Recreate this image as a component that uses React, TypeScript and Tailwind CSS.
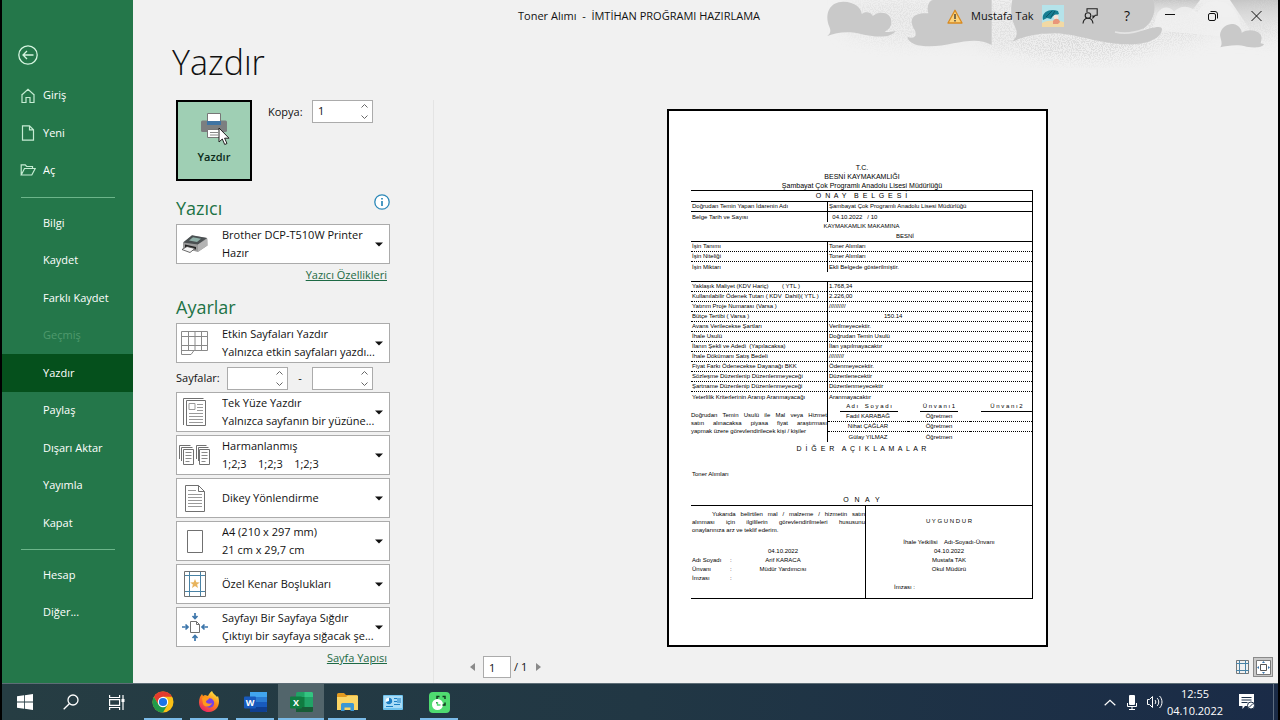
import React, { useState } from 'react';

interface NavItem {
    label: string;
    icon?: React.ReactNode;
    active?: boolean;
    disabled?: boolean;
}

interface Setting {
    id: string;
    title: string;
    detail?: string;
    icon: React.ReactNode;
}

const stroke = { fill: 'none', stroke: 'currentColor' };

const HomeIcon = () => (
    <svg width="16" height="16" viewBox="0 0 16 16" {...stroke}>
        <path d="M1.5 7.2 8 1.2l6.5 6M2 6.8V14.5h4V9.5h4v5h4V6.8" strokeWidth="1.2" />
    </svg>
);

const NewIcon = () => (
    <svg width="16" height="16" viewBox="0 0 16 16" {...stroke}>
        <path d="M2.5.8h7l4 4v10.4h-11zM9.5.8v4h4" strokeWidth="1.2" />
    </svg>
);

const OpenIcon = () => (
    <svg width="16" height="16" viewBox="0 0 16 16" {...stroke}>
        <path d="M1.2 13V2.8h4l1.5 1.7h5.8V6.5M1.2 13 4.5 6.5h10.7L11.8 13z" strokeWidth="1.2" />
    </svg>
);

const primaryNav: NavItem[] = [
    { label: 'Giriş', icon: <HomeIcon /> },
    { label: 'Yeni', icon: <NewIcon /> },
    { label: 'Aç', icon: <OpenIcon /> },
];

const fileNav: NavItem[] = [
    { label: 'Bilgi' },
    { label: 'Kaydet' },
    { label: 'Farklı Kaydet' },
    { label: 'Geçmiş', disabled: true },
    { label: 'Yazdır', active: true },
    { label: 'Paylaş' },
    { label: 'Dışarı Aktar' },
    { label: 'Yayımla' },
    { label: 'Kapat' },
];

const accountNav: NavItem[] = [{ label: 'Hesap' }, { label: 'Diğer...' }];

const PrinterDeviceIcon = () => (
    <svg width="28" height="20" viewBox="0 0 28 20">
        <path d="M2 9 11 1.5 26 4l.5 7.5L17 18 2 14z" fill="#9a9a9a" />
        <path d="M2 8.5 11 1.2 26 4 17 10.5z" fill="#4b5052" />
        <path d="M8 6.5 12 3.3 20 4.8 16 8z" fill="#8fb0a8" />
        <path d="M17 10.5 26.5 4.5v7L17 17.5z" fill="#b4b4b4" />
        <path d="M4 10.5 15 13v2.5L4 13z" fill="#222" />
        <path d="M1 15.5 6 12.5l8 2-5 4z" fill="#f5f5f5" stroke="#444" strokeWidth=".8" />
    </svg>
);

const SheetIcon = () => (
    <svg width="28" height="26" viewBox="0 0 28 26" fill="none" stroke="#8a8a8a">
        <path d="M.5 1.5h26v19H13l-3 4H.5zM.5 6.5h26M.5 15.500h26M.5 20.5H13M7.500 1.500v19M14 1.500v19M20.500 1.500v19" />
    </svg>
);

const OneSidedIcon = () => (
    <svg width="24" height="30" viewBox="0 0 24 30" fill="none" stroke="#707070">
        <path d="M.5 28V1.500h20" />
        <path d="M3.500 3.500h19v25h-19z" fill="#fff" />
        <path d="M6 6.500h6v6H6zM14 7.500h6M14 10.500h6M14 13.500h6M6 16.500h14M6 19.500h14M6 22.500h14M6 25.500h14" stroke="#9a9a9a" />
    </svg>
);

const CollatedIcon = () => (
    <svg width="32" height="22" viewBox="0 0 32 22" fill="none" stroke="#707070">
        <path d="M.5 15V1.500h11M2.500 17V3.500h11M17.500 15V1.500h10M19.500 17V3.500h10" />
        <path d="M4.500 5.500h10v15h-10zM20.500 5.500h10v15h-10z" fill="#fff" />
        <path d="M6.500 8.500h6M6.500 11.500h6M6.500 14.500h6M6.500 17.500h4M22.500 8.500h6M22.500 11.500h6M22.500 14.500h6M22.500 17.500h4" stroke="#8a8a8a" />
    </svg>
);

const PortraitIcon = () => (
    <svg width="20" height="27" viewBox="0 0 20 27" fill="none" stroke="#707070">
        <path d="M.5.5h13l6 6v20H.5zM13.500.500v6h6" />
        <path d="M3 5.500h8M3 9.500h14M3 12.500h14M3 15.500h14M3 18.500h14M3 21.500h14" stroke="#9a9a9a" />
    </svg>
);

const PaperIcon = () => (
    <svg width="16" height="23" viewBox="0 0 16 23" fill="#fff" stroke="#707070">
        <path d="M.5.5h15v22H.5z" />
    </svg>
);

const MarginsIcon = () => (
    <svg width="22" height="26" viewBox="0 0 22 26" fill="none">
        <path d="M.5.5h21v25H.5z" stroke="#707070" />
        <path d="M5.500 1v24M16.500 1v24M1 4.500h20M1 20.500h20" stroke="#4a83a5" />
        <path d="m11 8 1.300 3.200 3.500.200-2.700 2.200.900 3.400-3-1.900L8 17l.9-3.400-2.700-2.200 3.500-.2z" fill="#e8b45e" />
    </svg>
);

const FitPageIcon = () => (
    <svg width="26" height="28" viewBox="0 0 26 28" fill="none">
        <path d="M8.500 8.500h6l3 3v8h-9zM14.500 8.500v3h3" fill="#fff" stroke="#707070" />
        <path
            d="M13 0v5.500M10.500 3 13 5.500 15.500 3M13 28v-5.500M10.500 25l2.500-2.500 2.500 2.500M0 14h6M3.500 11.500 6 14l-2.500 2.500M26 14h-6M22.500 11.500 20 14l2.500 2.500"
            stroke="#3d76ab"
            strokeWidth="1.700"
        />
    </svg>
);

const printer: Setting = {
    id: 'printer',
    title: 'Brother DCP-T510W Printer',
    detail: 'Hazır',
    icon: <PrinterDeviceIcon />,
};

const scope: Setting = {
    id: 'scope',
    title: 'Etkin Sayfaları Yazdır',
    detail: 'Yalnızca etkin sayfaları yazdı...',
    icon: <SheetIcon />,
};

const pageSettings: Setting[] = [
    { id: 'sides', title: 'Tek Yüze Yazdır', detail: 'Yalnızca sayfanın bir yüzüne...', icon: <OneSidedIcon /> },
    { id: 'collate', title: 'Harmanlanmış', detail: '1;2;3    1;2;3    1;2;3', icon: <CollatedIcon /> },
    { id: 'orientation', title: 'Dikey Yönlendirme', icon: <PortraitIcon /> },
    { id: 'paper', title: 'A4 (210 x 297 mm)', detail: '21 cm x 29,7 cm', icon: <PaperIcon /> },
    { id: 'margins', title: 'Özel Kenar Boşlukları', icon: <MarginsIcon /> },
    { id: 'scaling', title: 'Sayfayı Bir Sayfaya Sığdır', detail: 'Çıktıyı bir sayfaya sığacak şe...', icon: <FitPageIcon /> },
];

const NavGroup: React.FC<{ items: NavItem[]; className: string }> = ({ items, className }) => (
    <ul className={`grid auto-rows-fr ${className}`}>
        {items.map((item) => (
            <li key={item.label} className="grid">
                <button
                    type="button"
                    disabled={item.disabled}
                    className={`flex items-center pl-[18px] text-left ${
                        item.active ? 'bg-[#05501c] text-white' : item.disabled ? 'text-[#4f9a6d]' : 'text-white'
                    }`}
                >
                    <span className="w-[23px] text-[#c5ecd3]">{item.icon}</span>
                    {item.label}
                </button>
            </li>
        ))}
    </ul>
);

const SettingSelect: React.FC<{ setting: Setting }> = ({ setting }) => (
    <div className="flex h-10 items-center border border-[#ababab] bg-white">
        <span className="flex w-9 shrink-0 justify-center">{setting.icon}</span>
        <div className="ml-[9px] min-w-0 flex-1 leading-[18px]">
            <select
                id={setting.id}
                aria-label={setting.title}
                className="block h-[18px] w-full appearance-none bg-transparent outline-none"
            >
                <option>{setting.title}</option>
            </select>
            {setting.detail && <p className="whitespace-pre">{setting.detail}</p>}
        </div>
        <svg className="mr-[6px] ml-1 shrink-0" width="8" height="5" viewBox="0 0 8 5">
            <path d="M0 .5h8L4 4.500z" fill="#111" />
        </svg>
    </div>
);

const Spinner: React.FC<{ id: string; label?: string; initial: string }> = ({ id, label, initial }) => {
    const [value, setValue] = useState(initial);
    const step = (by: number) => setValue(String(Math.max(1, (Number(value) || 0) + by)));

    return (
        <div className="flex h-[23px] w-[61px] border border-[#ababab] bg-white">
            <input
                id={id}
                aria-label={label}
                value={value}
                onChange={(e) => setValue(e.target.value)}
                className="w-[48px] bg-transparent pl-[5px] outline-none"
            />
            <div className="flex flex-1 flex-col justify-around">
                <button type="button" aria-label="Artır" onClick={() => step(1)}>
                    <svg width="7" height="4" viewBox="0 0 7 4" fill="none" stroke="#666">
                        <path d="M.5 3.500l3-3 3 3" />
                    </svg>
                </button>
                <button type="button" aria-label="Azalt" onClick={() => step(-1)}>
                    <svg width="7" height="4" viewBox="0 0 7 4" fill="none" stroke="#666">
                        <path d="M.5.5l3 3 3-3" />
                    </svg>
                </button>
            </div>
        </div>
    );
};

const HeaderClouds = () => (
    <svg className="absolute top-0 right-0" width="478" height="90" viewBox="0 0 1434 270" aria-hidden="true">
        <defs>
            <filter id="grain" x="0" y="0" width="100%" height="100%">
                <feTurbulence type="fractalNoise" baseFrequency="0.3" numOctaves="2" seed="4" />
                <feColorMatrix values="0 0 0 0 .7  0 0 0 0 .7  0 0 0 0 .7  0 0 0 8 -3.700" />
                <feComposite in2="SourceGraphic" operator="in" />
            </filter>
            <filter id="soft">
                <feGaussianBlur stdDeviation="22" />
            </filter>
            <linearGradient id="shade" x1="0" y1="0" x2="0" y2="1">
                <stop offset="0" stopColor="#c6c6c6" />
                <stop offset="1" stopColor="#f2f2f2" stopOpacity="0" />
            </linearGradient>
            <mask id="spread">
                <g filter="url(#soft)" fill="#fff">
                    <ellipse cx="300" cy="60" rx="170" ry="70" opacity=".5" />
                    <ellipse cx="600" cy="60" rx="60" ry="100" opacity=".6" />
                    <ellipse cx="850" cy="130" rx="220" ry="50" opacity=".9" />
                    <ellipse cx="1120" cy="70" rx="110" ry="70" opacity=".6" />
                    <ellipse cx="1400" cy="60" rx="70" ry="60" opacity=".5" />
                </g>
            </mask>
        </defs>
        <path d="M130 0h1304v120c-150-20-300-10-420 20-200 30-600 0-884-40z" fill="#e8e8e8" opacity=".5" filter="url(#soft)" />
        <path d="M1060 0h140l-30 40-60 20-60 20z" fill="url(#shade)" />
        <path d="M1290 0h144v150l-70-40z" fill="url(#shade)" />
        <g mask="url(#spread)">
            <rect width="1434" height="220" fill="#000" filter="url(#grain)" />
        </g>
        <path d="M1062 90c0-70 40-80 60-55 20-20 50-20 70 5 20-60 130-50 130 50v25z" fill="#f0f0f0" opacity=".8" />
        <g fill="#c9c9c9">
            <path d="M82 108c12-10 10-18 6-28C72 40 90 5 130 5c35 0 55 20 55 37 15-10 29-4 33 6 20-18 58-12 56 20 0 12-10 22-20 27 12 2 22 0 33-2-17 24-64 18-107 8-40-8-70-4-98 7z" />
            <path d="M322 110c18 8 32 0 22-20-18-30-10-52 41-50-6-20 2-40 15-40h175v135c-35-20-75-12-115-5-60 14-132 14-138-20z" />
            <path d="M637 125c16-16 16-28 8-45-14-30-13-60-8-80h423c12 40-8 76-40 93 32-8 66-20 66-5-2 28-46 47-106 45-100-4-150-33-220-33-60 0-100 15-123 25z" />
            <path d="M1261 142c8-12 1-22-1-37 2-25 25-35 40-33 18 3 25 18 25 26 20-14 60-8 60 17l-3 15 10 2c-7 13-32 11-52 8-30-8-60-2-79 2z" />
        </g>
        <path d="M945 96c25 6 55 4 85-8" fill="none" stroke="#e4e4e4" strokeWidth="5" />
    </svg>
);

const TitleBar = () => (
    <header className="relative flex h-8 items-center">
        <HeaderClouds />
        <h2 className="relative flex-1 pl-[198px] text-center whitespace-pre">Toner Alımı  -  İMTİHAN PROĞRAMI HAZIRLAMA</h2>
        <div className="relative flex items-center pr-4">
            <svg width="16" height="15" viewBox="0 0 16 15">
                <path d="M8 1.200 15 14H1z" fill="#fbd27c" stroke="#d98a1f" strokeWidth="1.300" strokeLinejoin="round" />
                <path d="M8 5v5M8 11v1.500" stroke="#333" strokeWidth="1.300" />
            </svg>
            <span className="ml-2 w-[62px] whitespace-nowrap">Mustafa Tak</span>
            <svg className="ml-[9px]" width="22" height="22" viewBox="0 0 22 22">
                <path d="M0 0h22v22H0z" fill="#b5e3ea" />
                <path d="M0 18c6-3 14-3 22-1v5H0z" fill="#f2d9a4" />
                <path d="M1 15C-1 7 8 3 16 6l1 3-6 2-2 3-4-1z" fill="#167d92" />
                <path d="M4 12 10 6M9 12l4-6" stroke="#0d5568" />
                <circle cx="14" cy="12" r="2.500" fill="#f5e3da" />
                <path d="M11 16c2-3 6-3 7 1l-2 2h-5z" fill="#e9967a" />
            </svg>
            <button type="button" aria-label="Geri bildirim" className="ml-[18px]">
                <svg width="16" height="16" viewBox="0 0 16 16" fill="none" stroke="#222" strokeWidth="1.100">
                    <path d="M5 4V.800h10.200v6.500h-2l-2.200 2.500V7.300" />
                    <circle cx="6" cy="7.500" r="2.800" />
                    <path d="M1 15.500c.3-3.200 2.300-5.200 5-5.200s4.700 2 5 5.200" />
                </svg>
            </button>
            <button type="button" aria-label="Yardım" className="ml-[17px] w-6 text-sm">?</button>
            <button type="button" aria-label="Simge durumuna küçült" className="ml-[26px]">
                <svg width="10" height="10" viewBox="0 0 10 10" stroke="#111">
                    <path d="M0 3.500h10" />
                </svg>
            </button>
            <button type="button" aria-label="Önceki boyut" className="ml-[33px]">
                <svg width="10" height="10" viewBox="0 0 10 10" fill="none" stroke="#111">
                    <rect x=".5" y="2.500" width="7" height="7" rx="1.500" />
                    <path d="M2.500.500H7A2.500 2.500 0 0 1 9.500 3v4.500" />
                </svg>
            </button>
            <button type="button" aria-label="Kapat" className="ml-[33px]">
                <svg width="11" height="10" viewBox="0 0 11 10" stroke="#111">
                    <path d="m.5 0 10 10M10.500 0l-10 10" />
                </svg>
            </button>
        </div>
    </header>
);

const PrintPanel = () => (
    <section className="w-[301px] shrink-0 border-r border-[#e4e4e4] pr-[43px] pl-[43px]">
        <div className="flex items-start">
            <button
                type="button"
                className="relative flex h-[81px] w-[76px] flex-col items-center border-2 border-black bg-[#9fcfb4] pt-[10px] font-semibold"
            >
                <svg width="28" height="27" viewBox="0 0 28 27">
                    <rect x="1" y="8.500" width="26" height="11.500" rx="1.500" fill="#7c7f80" />
                    <path d="M7.500 1.500h13v11h-13z" fill="#fff" stroke="#777" />
                    <path d="M7 9h14v4H7z" fill="#3f74a3" />
                    <path d="M7.500 17.500h13v8h-13z" fill="#fff" stroke="#777" />
                    <path d="M10 20.500h8M10 23h8" stroke="#888" />
                </svg>
                <span className="mt-[10px] text-[#0b2b1a]">Yazdır</span>
                <svg className="absolute top-[25px] left-[40px]" width="12" height="19" viewBox="0 0 12 19">
                    <path d="M1 1v14l3.300-3 2.400 5.500 2.300-1-2.400-5.300H11z" fill="#fff" stroke="#222" />
                </svg>
            </button>
            <label htmlFor="copies" className="ml-4 w-11 leading-6">Kopya:</label>
            <Spinner id="copies" initial="1" />
        </div>

        <div className="mt-[13px] flex items-start justify-between">
            <h3 className="text-lg leading-7 text-[#217346]">Yazıcı</h3>
            <svg width="16" height="16" viewBox="0 0 16 16" fill="none" stroke="#2b88b8" strokeWidth="1.300">
                <circle cx="8" cy="8" r="7.200" fill="#fff" />
                <path d="M8 7v5M8 4v1.600" strokeWidth="1.700" />
            </svg>
        </div>
        <div className="mt-[2px]">
            <SettingSelect setting={printer} />
        </div>
        <p className="mr-[3px] text-right leading-[22px]">
            <a href="#printer" className="text-[#1d6a45] underline">Yazıcı Özellikleri</a>
        </p>

        <h3 className="mt-[7px] mb-[2px] text-lg leading-7 text-[#217346]">Ayarlar</h3>
        <SettingSelect setting={scope} />
        <div className="mt-1 mb-[2px] flex items-center">
            <label htmlFor="from" className="w-[51px]">Sayfalar:</label>
            <Spinner id="from" initial="" />
            <span className="w-6 text-center">-</span>
            <Spinner id="to" label="Son sayfa" initial="" />
        </div>
        <div className="flex flex-col gap-[3px]">
            {pageSettings.map((setting) => (
                <SettingSelect key={setting.id} setting={setting} />
            ))}
        </div>
        <p className="mr-[3px] text-right leading-[22px]">
            <a href="#scope" className="text-[#1d6a45] underline">Sayfa Yapısı</a>
        </p>
    </section>
);

const workRows = [
    ['İşin Tanımı', 'Toner Alımları'],
    ['İşin Niteliği', 'Toner Alımları'],
    ['İşin Miktarı', 'Ekli Belgede gösterilmiştir.'],
];

const termRows = [
    ['Yaklaşık Maliyet (KDV Hariç)        ( YTL )', '1.768,34'],
    ['Kullanılabilir Ödenek Tutarı ( KDV  Dahil)( YTL )', '2.226,00'],
    ['Yatırım Proje Numarası (Varsa )', '//////////'],
    ['Bütçe Tertibi ( Varsa )', '                                 150.14'],
    ['Avans Verilecekse Şartları', 'Verilmeyecektir.'],
    ['İhale Usulü', 'Doğrudan Temin Usulü'],
    ['İlanın Şekli ve Adedi  (Yapılacaksa)', 'İlan yapılmayacaktır'],
    ['İhale Dökümanı Satış Bedeli', '/////////'],
    ['Fiyat Farkı Ödenecekse Dayanağı BKK', 'Ödenmeyecektir.'],
    ['Sözleşme Düzenlenip Düzenlenmeyeceği', 'Düzenlenecektir'],
    ['Şartname Düzenlenip Düzenlenmeyeceği', 'Düzenlenmeyecektir'],
    ['Yeterlilik Kriterlerinin Aranıp Aranmayacağı', 'Aranmayacaktır'],
];

const staff = [
    ['Fadıl KARABAĞ', 'Öğretmen'],
    ['Nihat ÇAĞLAR', 'Öğretmen'],
    ['Gülay YILMAZ', 'Öğretmen'],
];

const FormRows: React.FC<{ rows: string[][]; solid?: boolean }> = ({ rows, solid }) => (
    <table className="w-full table-fixed border-separate border-spacing-0">
        <tbody>
            {rows.map(([name, value], i) => {
                const last = i === rows.length - 1;
                const line = last ? '' : solid ? 'border-b border-black' : 'border-b border-black [border-bottom-style:dotted]';
                return (
                    <tr key={name}>
                        <th
                            scope="row"
                            className={`h-[10px] w-[136px] overflow-hidden p-0 pl-px text-left font-normal whitespace-pre ${line}`}
                        >
                            {name}
                        </th>
                        <td className={`h-[10px] border-l border-l-black p-0 pl-px whitespace-pre ${line}`}>{value}</td>
                    </tr>
                );
            })}
        </tbody>
    </table>
);

const ApprovalForm = () => (
    <article className="h-[538px] w-[381px] border-2 border-black bg-white pt-[52px] pr-[13px] pl-[22px] font-['Liberation_Sans',Arial,sans-serif] text-[6px] leading-[9px] text-black">
        <div className="text-center text-[7px]">
            <p>T.C.</p>
            <p>BESNİ KAYMAKAMLIĞI</p>
            <p>Şambayat Çok Programlı Anadolu Lisesi Müdürlüğü</p>
        </div>
        <div className="border-t border-r border-black">
            <p className="h-[11px] border-b border-black text-center text-[7px] leading-[10px] whitespace-pre">
                O  N  A  Y    B  E  L  G  E  S  İ
            </p>
            <FormRows
                solid
                rows={[
                    ['Doğrudan Temin Yapan İdarenin Adı', 'Şambayat Çok Programlı Anadolu Lisesi Müdürlüğü'],
                    ['Belge Tarih ve Sayısı', '  04.10.2022   / 10'],
                ]}
            />
            <p className="h-[10px] text-center">KAYMAKAMLIK MAKAMINA</p>
            <p className="h-[10px] border-b border-black pl-[205px]">BESNİ</p>
            <FormRows rows={workRows} />
            <div className="h-[10px] border-b border-black" />
            <FormRows rows={termRows} />
            <div className="flex">
                <p className="w-[136px] pt-[9px] leading-2 whitespace-nowrap">
                    <span className="block [text-align-last:justify]">Doğrudan Temin Usulü ile Mal veya Hizmet</span>
                    <span className="block [text-align-last:justify]">satın alınacaksa piyasa fiyat araştırması</span>
                    <span className="block">yapmak üzere görevlendirilecek kişi / kişiler</span>
                </p>
                <table className="flex-1 border-separate border-spacing-0 border-l border-black text-center">
                    <thead>
                        <tr className="whitespace-pre">
                            <th className="h-[10px] w-[80px] p-0 font-normal">
                                <span className="ml-3 block w-[58px] border-b border-black">A d ı    S o y a d ı</span>
                            </th>
                            <th className="w-[62px] p-0 font-normal">
                                <span className="mx-auto block w-[38px] border-b border-black">Ü n v a n ı 1</span>
                            </th>
                            <th className="p-0 font-normal">
                                <span className="ml-auto block w-[51px] border-b border-black">Ü n v a n ı 2</span>
                            </th>
                        </tr>
                    </thead>
                    <tbody>
                        {staff.map(([name, role], i) => {
                            const line = i < 2 ? 'border-b border-dotted border-black' : '';
                            return (
                                <tr key={name}>
                                    <td className={`h-[10px] p-0 ${line}`}>{name}</td>
                                    <td className={`p-0 ${line}`}>{role}</td>
                                    <td className={`p-0 ${line}`} />
                                </tr>
                            );
                        })}
                    </tbody>
                </table>
            </div>
            <p className="mt-[2px] text-center text-[7px] whitespace-pre">D  İ  Ğ  E  R    A  Ç  I  K  L  A  M  A  L  A  R</p>
            <p className="mt-[17px] pl-px">Toner Alımları</p>
            <p className="mt-4 h-[11px] border-b border-black text-center text-[7px] whitespace-pre">O   N   A   Y</p>
            <div className="flex h-[93px] border-b border-black">
                <div className="w-[175px] border-r border-black pt-1">
                    <p className="pl-px leading-2 whitespace-nowrap">
                        <span className="block pl-5 [text-align-last:justify]">Yukarıda belirtilen mal / malzeme / hizmetin satın</span>
                        <span className="block [text-align-last:justify]">alınması için ilgililerin görevlendirilmeleri hususunu</span>
                        <span className="block">onaylarınıza arz ve teklif ederim.</span>
                    </p>
                    <div className="mt-[13px] grid grid-cols-[38px_8px_90px] pl-px">
                        <span className="col-start-3 text-center">04.10.2022</span>
                        <span>Adı Soyadı</span>
                        <span>:</span>
                        <span className="text-center">Arif KARACA</span>
                        <span>Ünvanı</span>
                        <span>:</span>
                        <span className="text-center">Müdür Yardımcısı</span>
                        <span>İmzası</span>
                        <span>:</span>
                    </div>
                </div>
                <div className="flex-1 pt-[11px] text-center">
                    <p className="whitespace-pre">U Y G U N D U R</p>
                    <p className="mt-3 whitespace-pre">İhale Yetkilisi    Adı-Soyadı-Ünvanı</p>
                    <p>04.10.2022</p>
                    <p>Mustafa TAK</p>
                    <p>Okul Müdürü</p>
                    <p className="mt-[9px] pl-7 text-left">İmzası  :</p>
                </div>
            </div>
        </div>
    </article>
);

const Preview = () => (
    <section className="flex min-w-0 flex-1 flex-col pt-[9px]">
        <div className="flex justify-center pl-[3px]">
            <ApprovalForm />
        </div>
        <div className="mt-auto mb-1 flex h-6 items-center pr-[5px] pl-9">
            <button type="button" aria-label="Önceki sayfa">
                <svg width="5" height="8" viewBox="0 0 5 8">
                    <path d="M5 0v8L0 4z" fill="#8a8a8a" />
                </svg>
            </button>
            <input
                aria-label="Sayfa"
                defaultValue="1"
                className="ml-2 h-[22px] w-7 border border-[#ababab] bg-white pl-[5px] outline-none"
            />
            <span className="ml-[3px] w-[22px] whitespace-pre">/ 1</span>
            <button type="button" aria-label="Sonraki sayfa">
                <svg width="5" height="8" viewBox="0 0 5 8">
                    <path d="M0 0v8l5-4z" fill="#8a8a8a" />
                </svg>
            </button>
            <button type="button" aria-label="Kenar boşluklarını göster" className="ml-auto">
                <svg width="13" height="14" viewBox="0 0 13 14" fill="none">
                    <path d="M.5.5h12v13H.5z" stroke="#777" />
                    <path d="M3.500 0v14M9.500 0v14M0 3.500h13M0 10.500h13" stroke="#4a83a5" />
                </svg>
            </button>
            <button
                type="button"
                aria-label="Sayfaya yakınlaştır"
                className="ml-1 flex h-5 w-5 items-center justify-center border border-[#8a8a8a] bg-[#c9c9c9]"
            >
                <svg width="15" height="15" viewBox="0 0 15 15" fill="none">
                    <path d="M.5.5h14v14H.5z" fill="#fff" stroke="#777" />
                    <path d="M4.500 4.500h6v6h-6z" stroke="#555" />
                    <path d="M7.500 1 9 3H6zM7.500 14 9 12H6zM1 7.500 3 6v3zM14 7.500 12 6v3z" fill="#3d76ab" />
                </svg>
            </button>
        </div>
    </section>
);

const StartIcon = () => (
    <svg width="16" height="16" viewBox="0 0 16 16" fill="#fff">
        <path d="M0 2.300 7 1.300v6.300H0zM7.800 1.200 16 0v7.600H7.800zM0 8.400h7v6.300l-7-1zM7.800 8.400H16V16l-8.200-1.200z" />
    </svg>
);

const SearchIcon = () => (
    <svg width="16" height="16" viewBox="0 0 16 16" fill="none" stroke="#fff" strokeWidth="1.300">
        <circle cx="10" cy="6" r="5" />
        <path d="M6.300 9.700.7 15.300" />
    </svg>
);

const TaskViewIcon = () => (
    <svg width="16" height="15" viewBox="0 0 16 15" fill="none" stroke="#fff" strokeWidth="1.200">
        <path d="M.6 0v2.500h10V0M.6 15v-2.500h10V15M.6 4.600h10v5.800H.6zM14 0v15" />
        <path d="M12.500 4h3v3h-3z" fill="#fff" stroke="none" />
    </svg>
);

const ChromeIcon = () => (
    <svg width="22" height="22" viewBox="0 0 22 22">
        <circle cx="11" cy="11" r="10.500" fill="#fbc116" />
        <path d="M1.900 5.700A10.500 10.500 0 0 1 20.100 5.700H11L6.400 13.600z" fill="#e33b2e" />
        <path d="M1.900 5.700A10.500 10.500 0 0 0 11 21.500l4.600-7.900H6.400z" fill="#229a4a" />
        <circle cx="11" cy="11" r="5.200" fill="#fff" />
        <circle cx="11" cy="11" r="4.100" fill="#1b73e8" />
    </svg>
);

const FirefoxIcon = () => (
    <svg width="22" height="22" viewBox="0 0 22 22">
        <defs>
            <linearGradient id="fox" x1=".8" y1="0" x2=".2" y2="1">
                <stop offset="0" stopColor="#fff04a" />
                <stop offset=".45" stopColor="#ff8a16" />
                <stop offset="1" stopColor="#e8196b" />
            </linearGradient>
        </defs>
        <path d="M2 6 4 3l1 2 2-1 3 1c1-2 2-4 4-5 1 3 4 4 5 6l1-1c3 8-1 16-9 16S-1 14 2 6z" fill="url(#fox)" />
        <circle cx="11.500" cy="12" r="4.700" fill="#7542e5" />
        <path d="M4 7c3-2 5 0 7 0 0 2-3 2-3 4 1 2 4 2 6 1-1 4-7 5-9 1z" fill="#ff9a1c" />
    </svg>
);

const WordIcon = () => (
    <svg width="23" height="20" viewBox="0 0 23 20">
        <rect x="6" width="17" height="20" rx="1.500" fill="#2b7cd3" />
        <path d="M6 0h17v5H6z" fill="#41a5ee" />
        <path d="M6 10h17v5H6z" fill="#185abd" />
        <path d="M6 15h17v3.500a1.500 1.500 0 0 1-1.500 1.500H6z" fill="#103f91" />
        <rect y="4.500" width="12" height="12" rx="1" fill="#185abd" />
        <text x="6" y="14" textAnchor="middle" fontSize="9" fontWeight="700" fill="#fff">W</text>
    </svg>
);

const ExcelIcon = () => (
    <svg width="23" height="20" viewBox="0 0 23 20">
        <rect x="6" width="17" height="20" rx="1.500" fill="#21a366" />
        <path d="M14.500 0H21.500A1.500 1.500 0 0 1 23 1.500V5h-8.500z" fill="#33c481" />
        <path d="M6 5h8.500v5H6zM6 10h8.500v5H6z" fill="#107c41" />
        <path d="M6 15h17v3.500a1.500 1.500 0 0 1-1.500 1.500H6z" fill="#185c37" />
        <rect y="4.500" width="12" height="12" rx="1" fill="#107c41" />
        <text x="6" y="14" textAnchor="middle" fontSize="9" fontWeight="700" fill="#fff">X</text>
    </svg>
);

const ExplorerIcon = () => (
    <svg width="21" height="18" viewBox="0 0 21 18">
        <path d="M0 1.500A1.500 1.500 0 0 1 1.500 0H7l2 2h11v4H0z" fill="#e39a20" />
        <path d="M0 4h9l2-1.500h10V17H0z" fill="#fbd565" />
        <path d="M4 18v-6.500A1.500 1.500 0 0 1 5.500 10h10a1.500 1.500 0 0 1 1.500 1.500V18h-3.500v-3.500h-6V18z" fill="#3c97d3" />
    </svg>
);

const ControlPanelIcon = () => (
    <svg width="20" height="15" viewBox="0 0 20 15">
        <rect width="20" height="15" rx="1" fill="#6fc3ee" />
        <path d="M1 1h18v12H1z" fill="#a8dcf7" />
        <circle cx="6" cy="6" r="3.300" fill="#fff" />
        <path d="M6 6V2.700A3.300 3.300 0 1 1 2.800 7z" fill="#1b7fc4" />
        <path d="M11 3.500h3M11 6.500h3M11 9.500h6M3 11.500h7M15 3v5M17 3v5" stroke="#1b7fc4" />
    </svg>
);

const RecorderIcon = () => (
    <svg width="21" height="21" viewBox="0 0 21 21">
        <rect width="21" height="21" rx="4" fill="#4fdc70" />
        <circle cx="8.500" cy="12.500" r="5.500" fill="#fff" />
        <path d="M8 7V4.500h2.500M13.500 4.500H16V7M16 10.500V13h-2.500M8 10v1.500" stroke="#123d20" strokeWidth="1.500" fill="none" />
        <path d="M8.500 10v3h3" stroke="#4fdc70" strokeWidth="1.300" fill="none" />
    </svg>
);

const taskbarApps = [
    { name: 'Başlat', icon: <StartIcon /> },
    { name: 'Ara', icon: <SearchIcon /> },
    { name: 'Görev Görünümü', icon: <TaskViewIcon /> },
    { name: 'Chrome', icon: <ChromeIcon />, running: true },
    { name: 'Firefox', icon: <FirefoxIcon />, running: true },
    { name: 'Word', icon: <WordIcon />, running: true },
    { name: 'Excel', icon: <ExcelIcon />, running: true, focused: true },
    { name: 'Dosya Gezgini', icon: <ExplorerIcon />, running: true },
    { name: 'Denetim Masası', icon: <ControlPanelIcon /> },
    { name: 'Ekran Kaydedici', icon: <RecorderIcon />, running: true },
];

const Taskbar = () => (
    <footer className="flex h-[37px] border-t border-[#5d6d76] bg-linear-to-r from-[#263d43] via-[#213744] to-[#1a2b47] text-white">
        {taskbarApps.map((app) => (
            <button
                key={app.name}
                type="button"
                aria-label={app.name}
                className={`relative flex w-[46px] items-center justify-center ${app.focused ? 'bg-[#52656b]' : ''}`}
            >
                {app.icon}
                {app.running && (
                    <span
                        className={`absolute bottom-0 h-[2px] bg-[#7bbbe8] ${app.focused ? 'inset-x-0' : 'inset-x-[4px]'}`}
                    />
                )}
            </button>
        ))}
        <div className="ml-auto flex items-center">
            <svg width="12" height="7" viewBox="0 0 12 7" fill="none" stroke="#fff" strokeWidth="1.200">
                <path d="m.7 6.300 5.300-5 5.300 5" />
            </svg>
            <svg className="ml-[11px]" width="10" height="15" viewBox="0 0 10 15" fill="none" stroke="#fff">
                <rect x="2" width="6" height="10" rx="1" fill="#fff" stroke="none" />
                <path d="M.5 8v3.500h9V8M5 11.500V14M2 14.500h6" />
            </svg>
            <svg className="ml-[10px]" width="16" height="14" viewBox="0 0 16 14" fill="none" stroke="#fff">
                <path d="M.5 4.500h2l3-3v11l-3-3h-2zM8 5c1 1 1 3 0 4M10 3c2.300 2 2.300 6 0 8M12.500 1c3.300 3 3.300 9 0 12" />
            </svg>
            <div className="ml-1 text-center leading-[17px]">
                <p>12:55</p>
                <p>04.10.2022</p>
            </div>
            <button type="button" aria-label="Bildirimler" className="mr-[18px] ml-4">
                <svg width="16" height="16" viewBox="0 0 16 16">
                    <path d="M0 0h15v12H6l-2.500 3v-3H0z" fill="#fff" />
                    <path d="M2.500 3.500h10M2.500 6h10M2.500 8.500h6" stroke="#1c2f47" />
                    <circle cx="12" cy="11.500" r="3.500" fill="#fff" stroke="#1c2f47" />
                    <path d="m10 13.500 4-4" stroke="#1c2f47" />
                </svg>
            </button>
            <span className="mr-1 h-9 w-px bg-[#5d6d80]" />
        </div>
    </footer>
);

const App: React.FC = () => (
    <div className="flex min-h-screen flex-col border-x-2 border-black bg-[#f1f1f1] font-['Open_Sans','Noto_Sans',sans-serif] text-[11px] text-[#111]">
        <div className="flex flex-1">
            <nav className="w-[131px] shrink-0 bg-[#24774a]">
                <button type="button" aria-label="Geri" className="mt-[45px] ml-4 block text-[#d5f5e0]">
                    <svg width="20" height="20" viewBox="0 0 20 20" {...stroke} strokeWidth="1.300">
                        <circle cx="10" cy="10" r="9.200" />
                        <path d="M15.500 10H5M9 6l-4 4 4 4" />
                    </svg>
                </button>
                <NavGroup items={primaryNav} className="mt-3 h-28" />
                <hr className="mt-[8px] mr-[18px] mb-[6px] ml-[19px] border-[#6cb58a]" />
                <NavGroup items={fileNav} className="h-[338px]" />
                <hr className="mt-[7px] mr-[18px] mb-[6px] ml-[19px] border-[#6cb58a]" />
                <NavGroup items={accountNav} className="h-[75px]" />
            </nav>
            <main className="flex min-w-0 flex-1 flex-col">
                <TitleBar />
                <h1 className="relative mt-[6px] mb-[14px] pl-[39px] text-[34px] leading-[48px] font-light">Yazdır</h1>
                <div className="flex flex-1">
                    <PrintPanel />
                    <Preview />
                </div>
            </main>
        </div>
        <Taskbar />
    </div>
);

export default App;
